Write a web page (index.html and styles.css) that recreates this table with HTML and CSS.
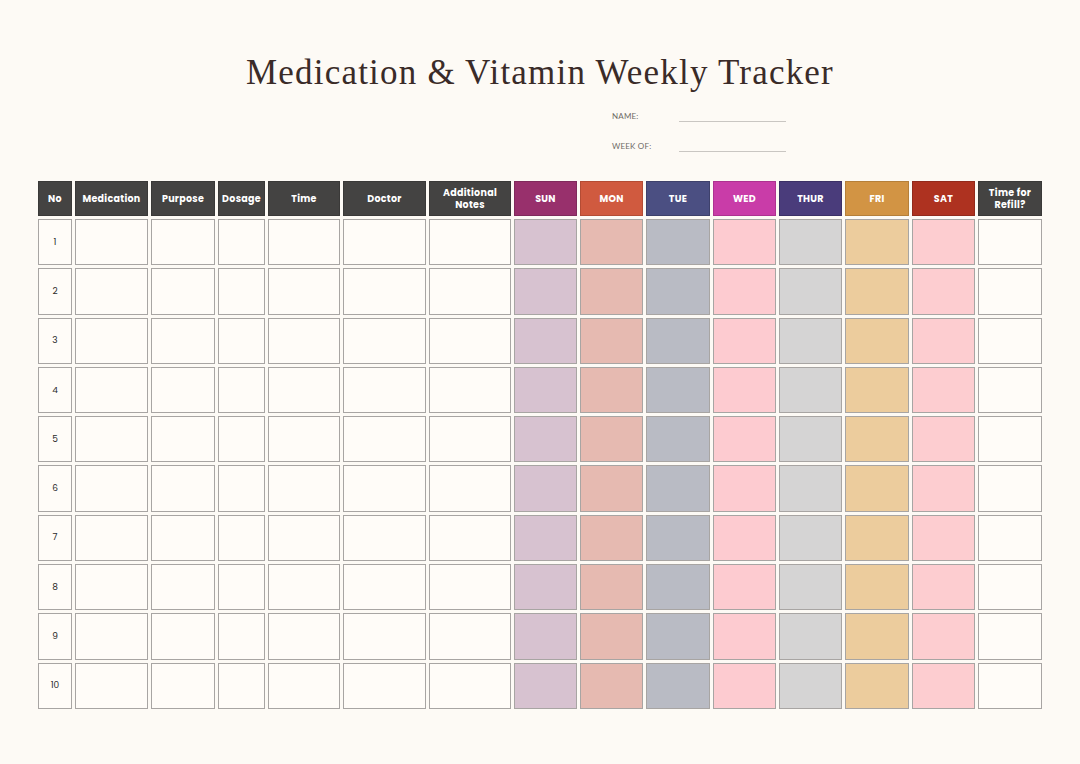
FILE: index.html
```html
<!DOCTYPE html>
<html lang="en">
<head>
<meta charset="utf-8">
<title>Medication &amp; Vitamin Weekly Tracker</title>
<link rel="stylesheet" href="styles.css">
</head>
<body>
<main class="page">
  <h1 class="title">Medication &amp; Vitamin Weekly Tracker</h1>
  <div class="info">
    <span class="info-label">NAME:</span><span class="info-line"></span>
    <span class="info-label">WEEK OF:</span><span class="info-line"></span>
  </div>
  <div class="tracker" id="tracker">
    <div class="hd">No</div>
    <div class="hd">Medication</div>
    <div class="hd">Purpose</div>
    <div class="hd">Dosage</div>
    <div class="hd">Time</div>
    <div class="hd">Doctor</div>
    <div class="hd">Additional<br>Notes</div>
    <div class="hd sun">SUN</div>
    <div class="hd mon">MON</div>
    <div class="hd tue">TUE</div>
    <div class="hd wed">WED</div>
    <div class="hd thu">THUR</div>
    <div class="hd fri">FRI</div>
    <div class="hd sat">SAT</div>
    <div class="hd">Time for<br>Refill?</div>
  </div>
</main>
<script>
  var t = document.getElementById('tracker');
  var days = ['sun','mon','tue','wed','thu','fri','sat'];
  for (var r = 1; r <= 10; r++) {
    var html = '<div class="cell num">' + r + '</div>';
    for (var i = 0; i < 6; i++) html += '<div class="cell"></div>';
    for (var d = 0; d < 7; d++) html += '<div class="cell c-' + days[d] + '"></div>';
    html += '<div class="cell"></div>';
    t.insertAdjacentHTML('beforeend', html);
  }
</script>
</body>
</html>
```

FILE: styles.css
```css
html, body {
  margin: 0;
  padding: 0;
  background: #fdfaf5;
}

.page {
  width: 1004px;
  padding: 53px 38px 0 38px;
  display: flex;
  flex-direction: column;
}

.title {
  margin: 0;
  font-family: "Liberation Serif", "DejaVu Serif", serif;
  font-weight: 400;
  font-size: 35px;
  line-height: 40px;
  letter-spacing: 1.2px;
  color: #3a2b28;
  text-align: center;
}

.info {
  margin: 8px 0 0 574px;
  display: grid;
  grid-template-columns: 67px 107px;
  grid-auto-rows: 30px;
  align-items: center;
  font-family: "Lato", "Open Sans", sans-serif;
  font-size: 8px;
  color: #6e6a66;
  letter-spacing: 0.2px;
}

.info-line {
  height: 1px;
  background: #c9c6c2;
  align-self: center;
  margin-top: 10px;
}

.tracker {
  margin-top: 20px;
  display: grid;
  grid-template-columns: 34px 73px 64px 47px 72px 83px 82px 63px 63px 64px 63px 63px 64px 63px 64px;
  grid-template-rows: 35px;
  grid-auto-rows: 46.3px;
  gap: 3px;
}

.hd {
  background: #444342;
  border: 1px solid #3a3938;
  box-sizing: border-box;
  color: #ffffff;
  font-family: "Poppins", "Lato", "Noto Sans", sans-serif;
  font-weight: 700;
  font-size: 9.5px;
  line-height: 12px;
  letter-spacing: 0.3px;
  display: flex;
  align-items: center;
  justify-content: center;
  text-align: center;
}

.hd.sun { background: #98306c; border-color: #7f2a5b; }
.hd.mon { background: #d05a3f; border-color: #b44c34; }
.hd.tue { background: #4b4f82; border-color: #3e416b; }
.hd.wed { background: #c93ca8; border-color: #ad3290; }
.hd.thu { background: #4a3c7b; border-color: #3c3066; }
.hd.fri { background: #d29444; border-color: #b57f39; }
.hd.sat { background: #ae3220; border-color: #922a1b; }

.cell {
  background: #fffcf8;
  border: 1px solid #a8a5a3;
  box-sizing: border-box;
}

.num {
  display: flex;
  align-items: center;
  justify-content: center;
  font-family: "Poppins", "Lato", "Noto Sans", sans-serif;
  font-size: 9px;
  color: #2a2a2a;
}

.c-sun { background: #d7c2d0; }
.c-mon { background: #e6bab1; }
.c-tue { background: #b9bbc4; }
.c-wed { background: #fdcbd0; }
.c-thu { background: #d5d4d4; }
.c-fri { background: #eccc9d; }
.c-sat { background: #fdcdd0; }
```
